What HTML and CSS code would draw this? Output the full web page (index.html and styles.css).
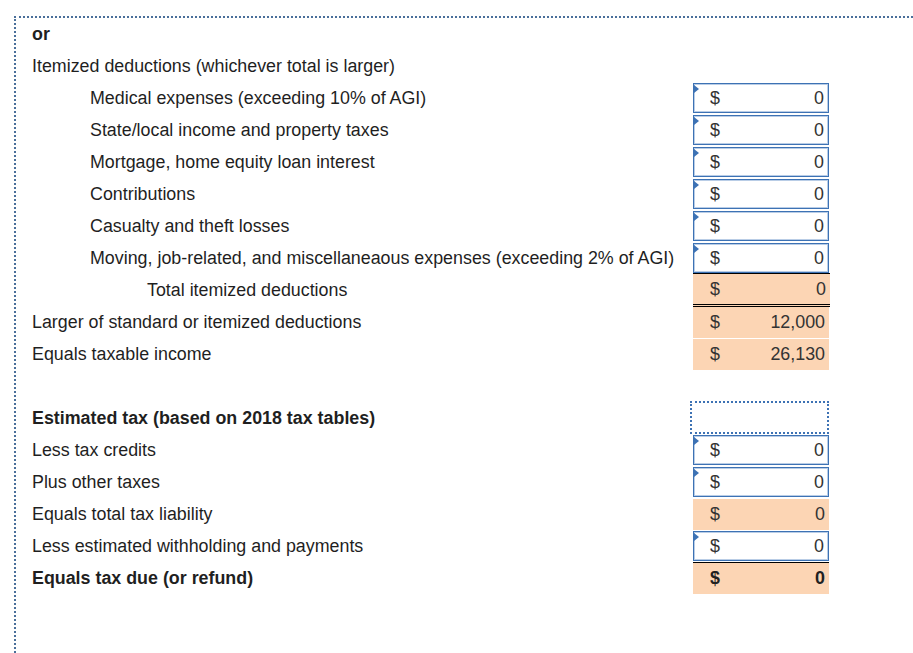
FILE: index.html
```html
<!DOCTYPE html>
<html>
<head>
<meta charset="utf-8">
<link rel="stylesheet" href="styles.css">
</head>
<body>
<div class="sheet">
  <div class="row"><div class="label bold">or</div><div class="cell"></div></div>
  <div class="row"><div class="label">Itemized deductions (whichever total is larger)</div><div class="cell"></div></div>
  <div class="row"><div class="label l2">Medical expenses (exceeding 10% of AGI)</div><div class="cell"><div class="input"><span>$</span><span>0</span></div></div></div>
  <div class="row"><div class="label l2">State/local income and property taxes</div><div class="cell"><div class="input"><span>$</span><span>0</span></div></div></div>
  <div class="row"><div class="label l2">Mortgage, home equity loan interest</div><div class="cell"><div class="input"><span>$</span><span>0</span></div></div></div>
  <div class="row"><div class="label l2">Contributions</div><div class="cell"><div class="input"><span>$</span><span>0</span></div></div></div>
  <div class="row"><div class="label l2">Casualty and theft losses</div><div class="cell"><div class="input"><span>$</span><span>0</span></div></div></div>
  <div class="row"><div class="label l2">Moving, job-related, and miscellaneaous expenses (exceeding 2% of AGI)</div><div class="cell"><div class="input"><span>$</span><span>0</span></div></div></div>
  <div class="row"><div class="label l3">Total itemized deductions</div><div class="cell"><div class="calc total"><span>$</span><span>0</span></div></div></div>
  <div class="row"><div class="label">Larger of standard or itemized deductions</div><div class="cell"><div class="calc"><span>$</span><span>12,000</span></div></div></div>
  <div class="row"><div class="label">Equals taxable income</div><div class="cell"><div class="calc"><span>$</span><span>26,130</span></div></div></div>
  <div class="row"><div class="label"></div><div class="cell"></div></div>
  <div class="row"><div class="label bold">Estimated tax (based on 2018 tax tables)</div><div class="cell"><div class="dotbox"></div></div></div>
  <div class="row"><div class="label">Less tax credits</div><div class="cell"><div class="input"><span>$</span><span>0</span></div></div></div>
  <div class="row"><div class="label">Plus other taxes</div><div class="cell"><div class="input"><span>$</span><span>0</span></div></div></div>
  <div class="row"><div class="label">Equals total tax liability</div><div class="cell"><div class="calc"><span>$</span><span>0</span></div></div></div>
  <div class="row"><div class="label">Less estimated withholding and payments</div><div class="cell"><div class="input"><span>$</span><span>0</span></div></div></div>
  <div class="row"><div class="label bold">Equals tax due (or refund)</div><div class="cell"><div class="calc final bold"><span>$</span><span>0</span></div></div></div>
</div>
</body>
</html>
```
FILE: styles.css
```css
html, body {
  margin: 0;
  padding: 0;
  background: #fff;
  height: 100%;
}
body {
  font-family: "Liberation Sans", Arial, sans-serif;
  font-size: 17.85px;
  color: #1f1f1f;
  overflow: hidden;
}
.sheet {
  box-sizing: border-box;
  margin: 16px 0 0 14px;
  border-top: 2px dotted #4a6f9a;
  border-left: 2px dotted #4a6f9a;
  padding-left: 16px;
  height: calc(100% - 16px);
  overflow: hidden;
}
.row {
  display: grid;
  grid-template-columns: 661px 136px;
  height: 32px;
}
.label {
  line-height: 32px;
  white-space: nowrap;
}
.l2 { padding-left: 58px; }
.l3 { padding-left: 115px; }
.bold { font-weight: bold; }
.cell {
  position: relative;
}
.input, .calc {
  box-sizing: border-box;
  display: flex;
  justify-content: space-between;
  align-items: center;
  padding: 0 4px 0 16px;
  color: #333;
}
.input {
  position: relative;
  margin-top: 1px;
  height: 30px;
  border: 1px solid #3d72b4;
  box-shadow: inset 0 0 0 1px #b9cde6;
  background: #fff;
}
.input::before {
  content: "";
  position: absolute;
  left: 0;
  top: 1px;
  border-top: 4px solid transparent;
  border-bottom: 4px solid transparent;
  border-left: 5px solid #3d72b4;
}
.calc {
  margin-top: 1px;
  height: 31px;
  background: #fcd5b4;
  padding-left: 17px;
}
.calc.total {
  margin-top: -1px;
  height: 34px;
  border-top: 1px solid #000;
  border-bottom: 3px double #000;
  width: 137px;
}
.calc.final {
  margin-top: 0;
  height: 32px;
  border-top: 1px solid #000;
  color: #222;
}
.dotbox {
  box-sizing: border-box;
  margin: -1px 0 0 -3px;
  width: 139px;
  height: 33px;
  border: 2px dotted #3d72b4;
}
```
